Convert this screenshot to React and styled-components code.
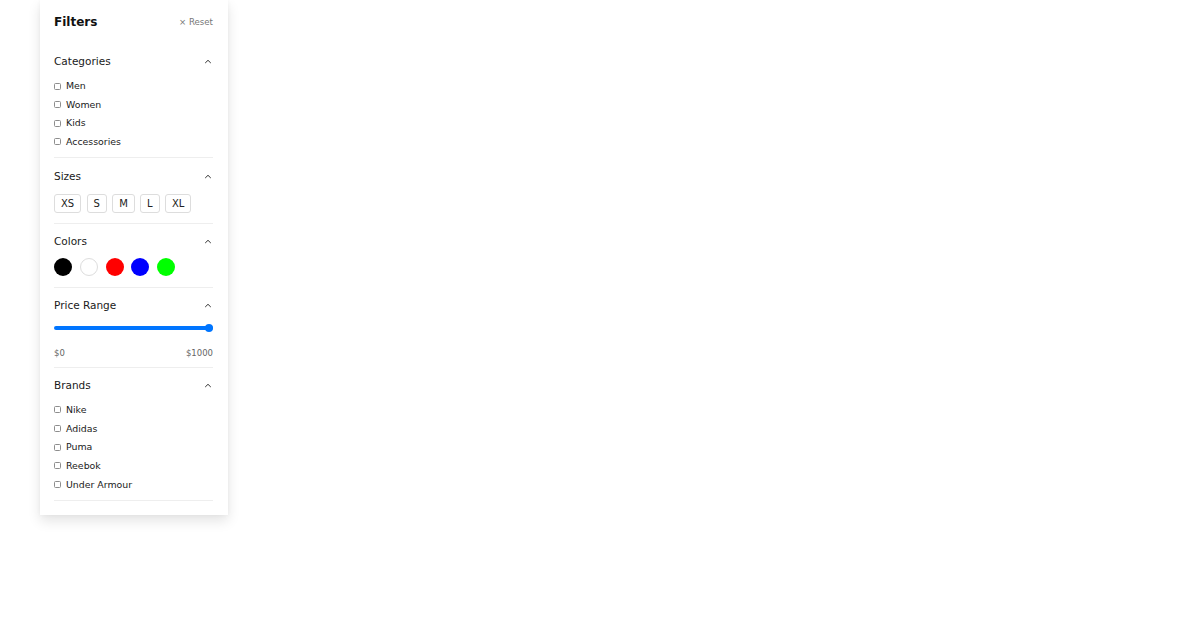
import React from "react";
import styled, { createGlobalStyle } from "styled-components";

const Global = createGlobalStyle`
  html, body { margin: 0; padding: 0; background: #fff; }
  body { font-family: "DejaVu Sans", "Liberation Sans", sans-serif; color: #222; }
`;

const Page = styled.div`
  padding-left: 40px;
  padding-bottom: 20px;
`;

const Panel = styled.aside`
  width: 188px;
  box-sizing: border-box;
  padding: 15px 15px 14px 14px;
  background: #fff;
  box-shadow: 0 6px 12px rgba(0, 0, 0, 0.11), 0 0 4px rgba(0, 0, 0, 0.04);
`;

const Header = styled.div`
  display: flex;
  align-items: center;
  justify-content: space-between;
  height: 14px;
  margin-bottom: 14px;
`;

const Title = styled.h2`
  margin: 0;
  font-size: 12px;
  line-height: 14px;
  font-weight: 700;
  color: #111;
`;

const ResetButton = styled.button`
  border: 0;
  background: none;
  padding: 0;
  font-family: inherit;
  font-size: 8.6px;
  line-height: 14px;
  color: #777;
  cursor: pointer;
`;

const Section = styled.section`
  padding: ${(p) => p.$pt ?? 12}px 0 ${(p) => p.$pb ?? 10}px;
  border-bottom: 1px solid #eee;
`;

const SectionHead = styled.div`
  display: flex;
  align-items: center;
  justify-content: space-between;
  height: 13px;
  margin-bottom: ${(p) => p.$mb ?? 11}px;
`;

const SectionTitle = styled.h3`
  margin: 0;
  font-size: 10.5px;
  line-height: 13px;
  font-weight: 400;
  color: #1a1a1a;
`;

const Chevron = () => (
  <svg width="8" height="5" viewBox="0 0 8 5" style={{ marginRight: 1 }}>
    <polyline points="1.2,4 4,1.3 6.8,4" fill="none" stroke="#333" strokeWidth="1" />
  </svg>
);

const CheckList = styled.div`
  display: flex;
  flex-direction: column;
  gap: 5.67px;
`;

const CheckRow = styled.label`
  display: flex;
  align-items: center;
  height: 13px;
  font-size: 9.4px;
  color: #1a1a1a;
  cursor: pointer;
`;

const Box = styled.span`
  width: 7px;
  height: 7px;
  box-sizing: border-box;
  border: 1px solid #8d8d8d;
  border-radius: 1.5px;
  margin-right: 5px;
  flex: none;
  margin-top: 1px;
`;

const SizeRow = styled.div`
  display: flex;
  gap: 5.3px;
`;

const SizeButton = styled.button`
  height: 19px;
  padding: 0 6px;
  border: 1px solid #ddd;
  border-radius: 3px;
  background: #fff;
  font-family: inherit;
  font-size: 10px;
  color: #222;
  cursor: pointer;
`;

const SwatchRow = styled.div`
  display: flex;
  gap: 7.75px;
`;

const Swatch = styled.span`
  width: 18px;
  height: 18px;
  border-radius: 50%;
  box-sizing: border-box;
  background: ${(p) => p.$color};
  border: ${(p) => (p.$color === "#fff" ? "1px solid #ddd" : "none")};
`;

const Slider = styled.div`
  position: relative;
  height: 8px;
  display: flex;
  align-items: center;
`;

const Track = styled.div`
  width: 100%;
  height: 4px;
  border-radius: 2px;
  background: #0075ff;
`;

const Thumb = styled.span`
  position: absolute;
  right: 0;
  top: 0;
  width: 8px;
  height: 8px;
  border-radius: 50%;
  background: #0075ff;
`;

const RangeLabels = styled.div`
  display: flex;
  justify-content: space-between;
  margin-top: 16px;
  font-size: 8.5px;
  line-height: 11px;
  color: #666;
`;

const Head = ({ children, mb }) => (
  <SectionHead $mb={mb}>
    <SectionTitle>{children}</SectionTitle>
    <Chevron />
  </SectionHead>
);

const Checks = ({ items }) => (
  <CheckList>
    {items.map((i) => (
      <CheckRow key={i}>
        <Box />
        {i}
      </CheckRow>
    ))}
  </CheckList>
);

export default function App() {
  return (
    <Page>
      <Global />
      <Panel>
        <Header>
          <Title>Filters</Title>
          <ResetButton>× Reset</ResetButton>
        </Header>
        <Section $pb={9}>
          <Head>Categories</Head>
          <Checks items={["Men", "Women", "Kids", "Accessories"]} />
        </Section>
        <Section>
          <Head>Sizes</Head>
          <SizeRow>
            {["XS", "S", "M", "L", "XL"].map((s) => (
              <SizeButton key={s}>{s}</SizeButton>
            ))}
          </SizeRow>
        </Section>
        <Section $pt={11} $pb={11}>
          <Head mb={10}>Colors</Head>
          <SwatchRow>
            {["#000", "#fff", "#f00", "#00f", "#0f0"].map((c) => (
              <Swatch key={c} $color={c} />
            ))}
          </SwatchRow>
        </Section>
        <Section $pt={11} $pb={8}>
          <Head mb={12}>Price Range</Head>
          <Slider>
            <Track />
            <Thumb />
          </Slider>
          <RangeLabels>
            <span>$0</span>
            <span>$1000</span>
          </RangeLabels>
        </Section>
        <Section $pt={11} $pb={9}>
          <Head>Brands</Head>
          <Checks items={["Nike", "Adidas", "Puma", "Reebok", "Under Armour"]} />
        </Section>
      </Panel>
    </Page>
  );
}
